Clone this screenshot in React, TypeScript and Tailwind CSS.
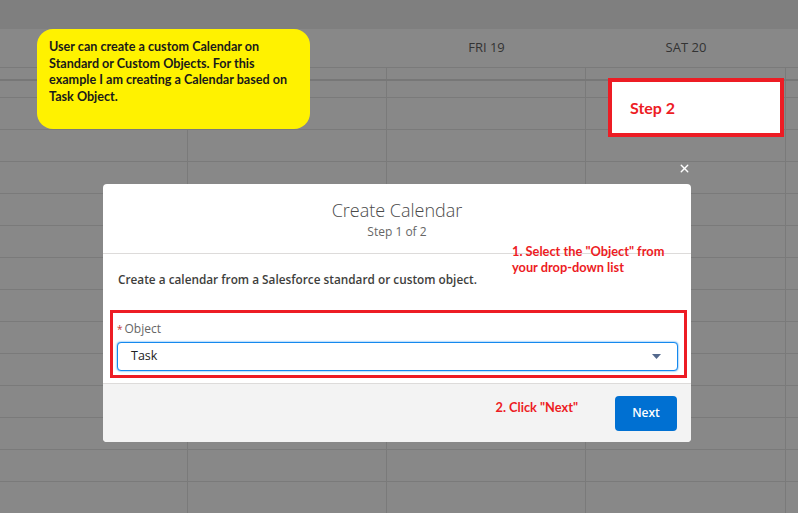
import { X } from "lucide-react";

const rowCount = 13;

function GridRow({ className }: { className: string }) {
  return (
    <div className={`grid grid-cols-[188px_199px_199px_200px_1fr] border-b border-[#7a7a7a] ${className}`}>
      <div className="border-r border-[#7a7a7a]" />
      <div className="border-r border-[#7a7a7a]" />
      <div className="border-r border-[#7a7a7a]" />
      <div className="border-r border-[#7a7a7a]" />
      <div />
    </div>
  );
}

function CalendarBackdrop() {
  return (
    <div className="flex flex-col">
      <div className="h-[29px] bg-[#7f7f7f]" />
      <div className="grid h-[39px] grid-cols-[188px_199px_199px_200px_1fr] items-center border-b border-[#7a7a7a] bg-[#888888] text-[13px] text-[#333333] font-['Open_Sans',sans-serif]">
        <div />
        <div />
        <div className="text-center">FRI 19</div>
        <div className="text-center">SAT 20</div>
        <div />
      </div>
      <div className="grid h-[13px] grid-cols-[188px_199px_199px_200px_1fr] border-b-2 border-[#777777]">
        <div className="border-r border-[#7a7a7a]" />
        <div className="border-r border-[#7a7a7a]" />
        <div className="border-r border-[#7a7a7a]" />
        <div className="border-r border-[#7a7a7a]" />
        <div />
      </div>
      <GridRow className="h-[17px]" />
      {Array.from({ length: rowCount }).map((_, i) => (
        <GridRow key={i} className="h-[32px]" />
      ))}
    </div>
  );
}

export default function App() {
  return (
    <div className="relative h-[513px] w-[798px] overflow-hidden bg-[#888888]">
      <CalendarBackdrop />

      {/* Yellow note */}
      <div className="absolute left-[37px] top-[29px] h-[100px] w-[273px] rounded-[16px] bg-[#fff200] px-[12px] pt-[10px] font-['Lato',sans-serif] text-[12.6px] font-bold leading-[16.7px] text-[#1a1a1a]">
        User can create a custom Calendar on Standard or Custom Objects. For this example I am creating a Calendar based on Task Object.
      </div>

      {/* Step 2 box */}
      <div className="absolute left-[608px] top-[78px] flex h-[59px] w-[176px] items-center border-[4px] border-[#ed1c24] bg-white pl-[18px] font-['Lato',sans-serif] text-[16px] font-bold text-[#ed1c24]">
        Step 2
      </div>

      {/* Close */}
      <X className="absolute left-[678px] top-[162px] h-[13px] w-[13px] text-white" strokeWidth={2.5} />

      {/* Modal */}
      <div className="absolute left-[103px] top-[184px] w-[588px] overflow-hidden rounded-[4px] bg-white font-['Open_Sans',sans-serif] text-[#3e3e3c]">
        <div className="flex h-[70px] flex-col items-center border-b border-[#dddbda] pt-[15px]">
          <div className="text-[18px] font-light leading-[22px] text-[#4a4a4a]">Create Calendar</div>
          <div className="mt-[3px] text-[12px] leading-[16px] text-[#666666]">Step 1 of 2</div>
        </div>

        <div className="relative px-[15px] pt-[17px] pb-[5px]">
          <div className="absolute left-[409px] top-[-11px] font-['Lato',sans-serif] text-[12.8px] font-bold leading-[16px] text-[#ed1c24]">
            1. Select the "Object" from
            <br />
            your drop-down list
          </div>
          <p className="text-[11.8px] font-semibold leading-[16px] text-[#3e3e3c]">
            Create a calendar from a Salesforce standard or custom object.
          </p>
          <div className="mt-[23px] -ml-[8px] w-[577px] border-[3px] border-[#ed1c24] px-[4px] pt-[8px] pb-[4px]">
            <div className="flex items-center gap-[2px] text-[12px] leading-[16px]">
              <span className="text-[10px] text-[#c23934]">*</span>
              <span className="text-[#666666]">Object</span>
            </div>
            <div className="mt-[5px] flex h-[29px] w-[561px] items-center justify-between rounded-[4px] border border-[#1589ee] bg-white pl-[13px] pr-[16px] text-[12.5px] text-[#222222] shadow-[0_0_2px_#1589ee]">
              <span>Task</span>
              <svg width="9" height="5" viewBox="0 0 9 5">
                <path d="M0 0 L9 0 L4.5 5 Z" fill="#54698d" />
              </svg>
            </div>
          </div>
        </div>

        <div className="flex h-[59px] items-center justify-end border-t border-[#dddbda] bg-[#f3f3f3] pr-[14px]">
          <span className="mr-[37px] mb-[10px] font-['Lato',sans-serif] text-[12.8px] font-bold text-[#ed1c24]">2. Click "Next"</span>
          <button className="h-[35px] w-[62px] rounded-[4px] bg-[#0070d2] text-[12px] font-semibold text-white">
            Next
          </button>
        </div>
      </div>
    </div>
  );
}
